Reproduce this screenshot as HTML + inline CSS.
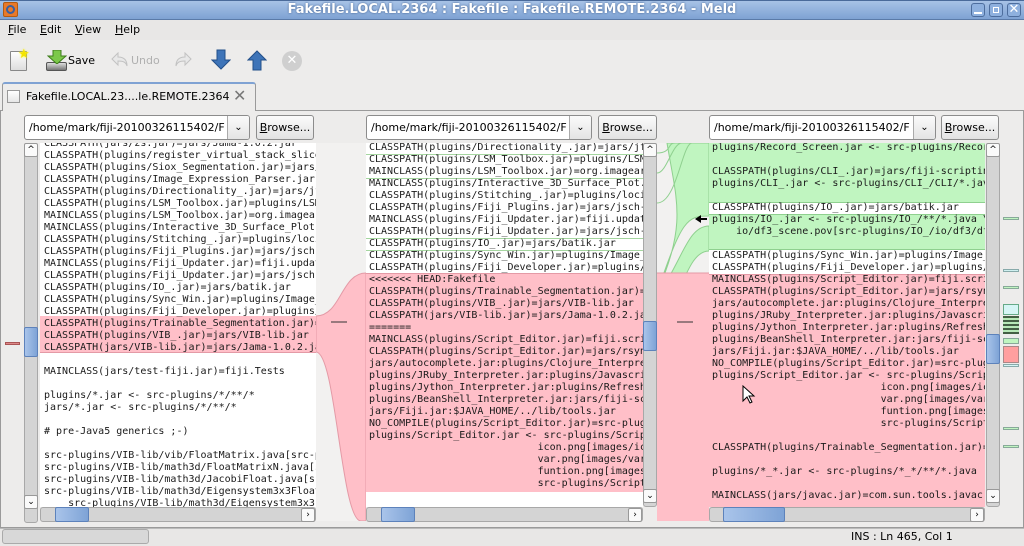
<!DOCTYPE html>
<html><head><meta charset="utf-8"><style>
*{margin:0;padding:0;box-sizing:border-box}
body{width:1024px;height:546px;overflow:hidden;background:#edeceb;font-family:"DejaVu Sans","Liberation Sans",sans-serif;font-size:11px;color:#000;position:relative}
.a{position:absolute}
pre{font-family:"DejaVu Sans Mono","Liberation Mono",monospace;font-size:10px;line-height:12px;color:#1a1a1a;white-space:pre;position:absolute;overflow:hidden}
.combo{position:absolute;height:25px;background:#fff;border:1px solid #8c8c8c;border-radius:3px;font-size:11px;line-height:23px;padding-left:4px;overflow:hidden;white-space:nowrap}
.cbtn{position:absolute;top:0;right:0;width:22px;height:23px;border-left:1px solid #aaa;background:linear-gradient(#fafafa,#e4e4e4);text-align:center;font-size:10px}
.btn{position:absolute;height:25px;border:1px solid #8c8c8c;border-radius:3px;background:linear-gradient(#fbfbfb,#e2e2e2);font-size:11px;line-height:23px;text-align:center}
.vs{position:absolute;width:14px;background:#d4d4d4;border:1px solid #a8a8a8;border-radius:3px}
.thumb{position:absolute;background:linear-gradient(90deg,#a9c4ea,#7ea3d6);border:1px solid #5d82bb;border-radius:2px}
.arr{position:absolute;width:14px;height:14px;background:#fafafa;border:1px solid #999;border-radius:2px;font-size:9px;text-align:center;line-height:12px}
</style></head><body>
<!-- title bar -->
<div class="a" style="left:0;top:0;width:1024px;height:20px;background:linear-gradient(#a7c2e6,#7ea2d3);border-top:1px solid #4a6a9a;border-bottom:1px solid #5a7aa8"></div>
<div class="a" style="left:3px;top:2px;width:15px;height:15px;background:#e8792a;border-radius:2px;border:1px solid #b35a10"></div>
<div class="a" style="left:6px;top:5px;width:9px;height:9px;border:2px solid #3a5fa0;border-radius:50%"></div>
<div class="a" style="left:0;top:1px;width:1024px;text-align:center;color:#fff;font-weight:bold;font-size:13px;line-height:18px;text-shadow:0 0 2px #3d5d8d">Fakefile.LOCAL.2364 : Fakefile : Fakefile.REMOTE.2364 - Meld</div>
<div class="a" style="left:971px;top:3px;width:14px;height:14px;border:1px solid #4d6d9d;border-radius:3px;background:#8eb0de"></div>
<div class="a" style="left:974px;top:12px;width:8px;height:2px;background:#fff"></div>
<div class="a" style="left:989px;top:3px;width:14px;height:14px;border:1px solid #4d6d9d;border-radius:3px;background:#8eb0de"></div>
<div class="a" style="left:993px;top:7px;width:6px;height:6px;border:1px solid #fff"></div>
<div class="a" style="left:1007px;top:3px;width:14px;height:14px;border:1px solid #4d6d9d;border-radius:3px;background:#8eb0de;color:#fff;font-size:13px;line-height:12px;text-align:center;font-weight:bold">✕</div>
<!-- menu -->
<div class="a" style="left:0;top:20px;width:1024px;height:20px;background:#e8e7e6"></div>
<div class="a" style="left:8px;top:23px"><u>F</u>ile</div>
<div class="a" style="left:40px;top:23px"><u>E</u>dit</div>
<div class="a" style="left:75px;top:23px"><u>V</u>iew</div>
<div class="a" style="left:115px;top:23px"><u>H</u>elp</div>
<!-- toolbar -->
<div class="a" style="left:10px;top:51px;width:17px;height:20px;background:linear-gradient(#fff,#ddd);border:1px solid #888;border-radius:1px"></div>
<div class="a" style="left:18px;top:47px;color:#f4e400;font-size:13px;text-shadow:0 0 2px #ff0">★</div>
<div class="a" style="left:46px;top:62px;width:21px;height:9px;background:linear-gradient(#ddd,#777);border:1px solid #555;border-radius:2px"></div>
<svg class="a" style="left:47px;top:50px" width="20" height="14"><path d="M6 0h8v6h5l-9 8-9-8h5z" fill="#7cc84a" stroke="#3e7d1c"/></svg>
<div class="a" style="left:68px;top:54px">Save</div>
<svg class="a" style="left:111px;top:52px" width="18" height="16"><path d="M7 1L1 7l6 6V9c5 0 8 1 9 5 0-6-3-9-9-9z" fill="#e8e8e8" stroke="#c2c2c2"/></svg>
<div class="a" style="left:131px;top:54px;color:#b0b0b0">Undo</div>
<svg class="a" style="left:174px;top:52px" width="18" height="16"><path d="M11 1l6 6-6 6V9c-5 0-8 1-9 5 0-6 3-9 9-9z" fill="#e8e8e8" stroke="#c2c2c2"/></svg>
<svg class="a" style="left:211px;top:49px" width="20" height="22"><path d="M6 1h8v10h5L10 20 1 11h5z" fill="#3e74b8" stroke="#234f8a"/></svg>
<svg class="a" style="left:247px;top:49px" width="20" height="22"><path d="M6 21h8V11h5L10 2 1 11h5z" fill="#3e74b8" stroke="#234f8a"/></svg>
<div class="a" style="left:282px;top:51px;width:20px;height:20px;border-radius:50%;background:#cfcfcf;color:#fff;text-align:center;font-size:13px;line-height:20px;font-weight:bold">✕</div>
<!-- notebook -->
<div class="a" style="left:0;top:110px;width:1024px;height:418px;border:1px solid #9a9a9a;background:#edeceb"></div>
<div class="a" style="left:2px;top:82px;width:254px;height:29px;border:1px solid #9a9a9a;border-bottom:none;border-top:2px solid #7fa2d3;border-radius:3px 3px 0 0;background:#edeceb"></div>
<div class="a" style="left:7px;top:90px;width:13px;height:13px;border:1px solid #999;background:linear-gradient(#fff,#e6e6e6)"></div>
<div class="a" style="left:26px;top:90px">Fakefile.LOCAL.23....le.REMOTE.2364</div>
<div class="a" style="left:233px;top:86px;color:#777;font-size:16px;font-weight:bold">✕</div>
<!-- combos -->
<div class="combo" style="left:24px;top:115px;width:226px">/home/mark/fiji-20100326115402/F<div class="cbtn">⌄</div></div>
<div class="btn" style="left:256px;top:115px;width:58px"><u>B</u>rowse...</div>
<div class="combo" style="left:366px;top:115px;width:226px">/home/mark/fiji-20100326115402/F<div class="cbtn">⌄</div></div>
<div class="btn" style="left:598px;top:115px;width:59px"><u>B</u>rowse...</div>
<div class="combo" style="left:709px;top:115px;width:227px">/home/mark/fiji-20100326115402/F<div class="cbtn">⌄</div></div>
<div class="btn" style="left:941px;top:115px;width:58px"><u>B</u>rowse...</div>
<!-- links -->
<svg class="a" style="left:316px;top:143px" width="50" height="378">
<rect width="50" height="378" fill="#f2f1f0"/>
<path d="M0 173 C25 173 25 130 50 130 L50 378 L45 378 C25 378 20 209 0 209Z" fill="#ffbfc8" stroke="#e49aa6"/>
<path d="M15 179h16" stroke="#333"/>
</svg>
<svg class="a" style="left:657px;top:143px" width="52" height="378">
<rect width="52" height="378" fill="#f2f1f0"/>
<path d="M10 0 L52 0 L52 73 C30 73 25 76 0 150 C30 80 20 60 10 0Z" fill="#c0f5c0" stroke="#8fd08f"/>
<path d="M52 83 L52 108 C30 108 25 155 0 185 L0 152 C25 120 30 83 52 83Z" fill="#c0f5c0" stroke="#8fd08f"/>
<path d="M0 130 L52 130 L52 378 L0 378Z" fill="#ffbfc8"/>
<path d="M0 130 L52 130" stroke="#e49aa6"/>
<path d="M0 10 C15 10 10 0 18 0 M0 30 C10 30 15 0 25 0 M0 60 C20 60 25 0 35 0" stroke="#8fd08f" fill="none"/>
<path d="M20 179h16" stroke="#333"/>
<path d="M38 76l6-4v3h6v2h-6v3z" fill="#000"/>
</svg>
<!-- left pane -->
<div class="a" style="left:40px;top:143px;width:276px;height:364px;background:#fff"></div>
<div class="a" style="left:40px;top:316px;width:276px;height:37px;background:#ffbfc8;border-bottom:1px solid #e49aa6"></div>
<pre style="left:44px;top:143px;width:272px;height:364px"><span style="position:relative;top:-5px;display:block">CLASSPATH(jars/zs.jar)=jars/Jama-1.0.2.jar
CLASSPATH(plugins/register_virtual_stack_slices
CLASSPATH(plugins/Siox_Segmentation.jar)=jars/f
CLASSPATH(plugins/Image_Expression_Parser.jar)=
CLASSPATH(plugins/Directionality_.jar)=jars/jfr
CLASSPATH(plugins/LSM_Toolbox.jar)=plugins/LSM_
MAINCLASS(plugins/LSM_Toolbox.jar)=org.imagearc
MAINCLASS(plugins/Interactive_3D_Surface_Plot.j
CLASSPATH(plugins/Stitching_.jar)=plugins/loci_
CLASSPATH(plugins/Fiji_Plugins.jar)=jars/jsch-0
MAINCLASS(plugins/Fiji_Updater.jar)=fiji.update
CLASSPATH(plugins/Fiji_Updater.jar)=jars/jsch-0
CLASSPATH(plugins/IO_.jar)=jars/batik.jar
CLASSPATH(plugins/Sync_Win.jar)=plugins/Image_5
CLASSPATH(plugins/Fiji_Developer.jar)=plugins/S
CLASSPATH(plugins/Trainable_Segmentation.jar)=p
CLASSPATH(plugins/VIB_.jar)=jars/VIB-lib.jar
CLASSPATH(jars/VIB-lib.jar)=jars/Jama-1.0.2.jar

MAINCLASS(jars/test-fiji.jar)=fiji.Tests

plugins/*.jar &lt;- src-plugins/*/**/*
jars/*.jar &lt;- src-plugins/*/**/*

# pre-Java5 generics ;-)

src-plugins/VIB-lib/vib/FloatMatrix.java[src-pl
src-plugins/VIB-lib/math3d/FloatMatrixN.java[sr
src-plugins/VIB-lib/math3d/JacobiFloat.java[src
src-plugins/VIB-lib/math3d/Eigensystem3x3Float.
    src-plugins/VIB-lib/math3d/Eigensystem3x3Fl</span></pre>
<!-- middle pane -->
<div class="a" style="left:366px;top:143px;width:277px;height:364px;background:#fff"></div>
<div class="a" style="left:366px;top:273px;width:277px;height:219px;background:#ffbfc8;border-top:1px solid #e49aa6"></div>
<div class="a" style="left:366px;top:154px;width:277px;height:1px;background:#a5d6a0"></div>
<div class="a" style="left:366px;top:178px;width:277px;height:1px;background:#a5d6a0"></div>
<div class="a" style="left:366px;top:238px;width:277px;height:1px;background:#a5d6a0"></div>
<div class="a" style="left:366px;top:250px;width:277px;height:1px;background:#a5d6a0"></div>
<pre style="left:369px;top:143px;width:274px;height:364px"><span style="position:relative;top:-1px;display:block">CLASSPATH(plugins/Directionality_.jar)=jars/jfr
CLASSPATH(plugins/LSM_Toolbox.jar)=plugins/LSM_
MAINCLASS(plugins/LSM_Toolbox.jar)=org.imagearc
MAINCLASS(plugins/Interactive_3D_Surface_Plot.j
CLASSPATH(plugins/Stitching_.jar)=plugins/loci_
CLASSPATH(plugins/Fiji_Plugins.jar)=jars/jsch-0
MAINCLASS(plugins/Fiji_Updater.jar)=fiji.update
CLASSPATH(plugins/Fiji_Updater.jar)=jars/jsch-0
CLASSPATH(plugins/IO_.jar)=jars/batik.jar
CLASSPATH(plugins/Sync_Win.jar)=plugins/Image_5
CLASSPATH(plugins/Fiji_Developer.jar)=plugins/S
&lt;&lt;&lt;&lt;&lt;&lt;&lt; HEAD:Fakefile
CLASSPATH(plugins/Trainable_Segmentation.jar)=p
CLASSPATH(plugins/VIB_.jar)=jars/VIB-lib.jar
CLASSPATH(jars/VIB-lib.jar)=jars/Jama-1.0.2.jar
=======
MAINCLASS(plugins/Script_Editor.jar)=fiji.scrip
CLASSPATH(plugins/Script_Editor.jar)=jars/rsynt
jars/autocomplete.jar:plugins/Clojure_Interpret
plugins/JRuby_Interpreter.jar:plugins/Javascrip
plugins/Jython_Interpreter.jar:plugins/Refresh_
plugins/BeanShell_Interpreter.jar:jars/fiji-scr
jars/Fiji.jar:$JAVA_HOME/../lib/tools.jar
NO_COMPILE(plugins/Script_Editor.jar)=src-plugi
plugins/Script_Editor.jar &lt;- src-plugins/Script
                            icon.png[images/ico
                            var.png[images/var.
                            funtion.png[images/
                            src-plugins/Script_</span></pre>
<!-- right pane -->
<div class="a" style="left:709px;top:143px;width:276px;height:364px;background:#fff"></div>
<div class="a" style="left:709px;top:143px;width:276px;height:60px;background:#c0f5c0;border-bottom:1px solid #8fd08f"></div>
<div class="a" style="left:709px;top:214px;width:276px;height:36px;background:#c0f5c0;border-top:1px solid #8fd08f;border-bottom:1px solid #8fd08f"></div>
<div class="a" style="left:709px;top:274px;width:276px;height:233px;background:#ffbfc8;border-top:1px solid #e49aa6"></div>
<pre style="left:712px;top:143px;width:273px;height:364px"><span style="position:relative;top:-1px;display:block">plugins/Record_Screen.jar &lt;- src-plugins/Record

CLASSPATH(plugins/CLI_.jar)=jars/fiji-scripting
plugins/CLI_.jar &lt;- src-plugins/CLI_/CLI/*.java

CLASSPATH(plugins/IO_.jar)=jars/batik.jar
plugins/IO_.jar &lt;- src-plugins/IO_/**/*.java \
    io/df3_scene.pov[src-plugins/IO_/io/df3/df3

CLASSPATH(plugins/Sync_Win.jar)=plugins/Image_5
CLASSPATH(plugins/Fiji_Developer.jar)=plugins/S
MAINCLASS(plugins/Script_Editor.jar)=fiji.scrip
CLASSPATH(plugins/Script_Editor.jar)=jars/rsynt
jars/autocomplete.jar:plugins/Clojure_Interpret
plugins/JRuby_Interpreter.jar:plugins/Javascrip
plugins/Jython_Interpreter.jar:plugins/Refresh_
plugins/BeanShell_Interpreter.jar:jars/fiji-scr
jars/Fiji.jar:$JAVA_HOME/../lib/tools.jar
NO_COMPILE(plugins/Script_Editor.jar)=src-plugi
plugins/Script_Editor.jar &lt;- src-plugins/Script
                            icon.png[images/ico
                            var.png[images/var.
                            funtion.png[images/
                            src-plugins/Script_

CLASSPATH(plugins/Trainable_Segmentation.jar)=p

plugins/*_*.jar &lt;- src-plugins/*_*/**/*.java

MAINCLASS(jars/javac.jar)=com.sun.tools.javac.M</span></pre>
<svg class="a" style="left:742px;top:385px" width="14" height="20"><path d="M1 1v15l4-4 3 6 2-1-3-6h5z" fill="#fff" stroke="#000"/></svg>
<!-- vertical scrollbars -->
<div class="vs" style="left:24px;top:143px;height:380px"></div>
<div class="arr" style="left:24px;top:143px">^</div>
<div class="arr" style="left:24px;top:495px">⌄</div>
<div class="thumb" style="left:24px;top:327px;width:14px;height:30px"></div>
<div class="a" style="left:5px;top:342px;width:15px;height:3px;background:#d88;border:1px solid #a55"></div>
<div class="vs" style="left:643px;top:143px;height:364px"></div>
<div class="arr" style="left:643px;top:143px">^</div>
<div class="arr" style="left:643px;top:489px">⌄</div>
<div class="thumb" style="left:643px;top:321px;width:14px;height:30px"></div>
<div class="vs" style="left:986px;top:143px;height:364px"></div>
<div class="arr" style="left:986px;top:143px">^</div>
<div class="arr" style="left:986px;top:489px">⌄</div>
<div class="thumb" style="left:986px;top:334px;width:14px;height:30px"></div>
<!-- overview map -->
<div class="a" style="left:1003px;top:217px;width:16px;height:3px;background:#c0f5c0;border:1px solid #8a9"></div>
<div class="a" style="left:1003px;top:269px;width:16px;height:3px;background:#d0f0f0;border:1px solid #8aa"></div>
<div class="a" style="left:1003px;top:286px;width:16px;height:3px;background:#c0f5c0;border:1px solid #8a9"></div>
<div class="a" style="left:1003px;top:304px;width:16px;height:11px;background:#d6f5f5;border:1px solid #6a8"></div>
<div class="a" style="left:1003px;top:316px;width:16px;height:18px;background:repeating-linear-gradient(#445f44 0 2px,#b8e8b8 2px 4px)"></div>
<div class="a" style="left:1003px;top:338px;width:16px;height:6px;background:#c0f5c0;border:1px solid #8a9"></div>
<div class="a" style="left:1003px;top:346px;width:16px;height:17px;background:#ff9f9f;border:1px solid #a88"></div>
<div class="a" style="left:1003px;top:364px;width:16px;height:3px;background:#d6f5f5;border:1px solid #8aa"></div>
<div class="a" style="left:1003px;top:427px;width:16px;height:3px;background:#c0f5c0;border:1px solid #8a9"></div>
<div class="a" style="left:1003px;top:445px;width:16px;height:3px;background:#c0f5c0;border:1px solid #8a9"></div>
<!-- horizontal scrollbars -->
<div class="a" style="left:40px;top:507px;width:276px;height:15px;background:#d4d4d4;border:1px solid #a8a8a8;border-radius:3px"></div>
<div class="thumb" style="left:55px;top:507px;width:34px;height:15px"></div>
<div class="arr" style="left:301px;top:508px">›</div>
<div class="a" style="left:366px;top:507px;width:277px;height:15px;background:#d4d4d4;border:1px solid #a8a8a8;border-radius:3px"></div>
<div class="thumb" style="left:381px;top:507px;width:34px;height:15px"></div>
<div class="arr" style="left:628px;top:508px">›</div>
<div class="a" style="left:709px;top:507px;width:276px;height:15px;background:#d4d4d4;border:1px solid #a8a8a8;border-radius:3px"></div>
<div class="thumb" style="left:723px;top:507px;width:62px;height:15px"></div>
<div class="arr" style="left:970px;top:508px">›</div>
<!-- status -->
<div class="a" style="left:0;top:528px;width:1024px;height:18px;background:#e8e7e6;border-top:1px solid #bbb"></div>
<div class="a" style="left:2px;top:529px;width:147px;height:15px;background:#d8d8d8;border:1px solid #aaa;border-radius:3px"></div>
<div class="a" style="left:851px;top:530px">INS : Ln 465, Col 1</div>
</body></html>
